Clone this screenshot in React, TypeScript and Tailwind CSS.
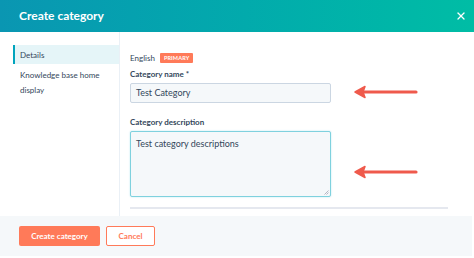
import { X } from 'lucide-react';

const Arrow = ({ top }: { top: number }) => (
  <svg
    className="absolute"
    style={{ left: 352, top: top - 8 }}
    width="68"
    height="16"
    viewBox="0 0 68 16"
  >
    <line x1="10" y1="8" x2="64" y2="8" stroke="#ef5a4c" strokeWidth="3.2" strokeLinecap="round" />
    <path d="M3 8 L13 2.5 L11 8 L13 13.5 Z" fill="#ef5a4c" stroke="#ef5a4c" strokeWidth="1.5" strokeLinejoin="round" />
  </svg>
);

export default function App() {
  return (
    <div
      className="relative w-[474px] h-[258px] bg-white overflow-hidden text-[#33475b]"
      style={{ fontFamily: 'Lato, "Open Sans", sans-serif' }}
    >
      {/* Header */}
      <div className="h-[32px] flex items-center justify-between pl-[19px] pr-[7px] bg-gradient-to-r from-[#0a96b2] to-[#00bda5]">
        <h1 className="text-white text-[12px] font-bold">Create category</h1>
        <X size={12} color="white" strokeWidth={2.5} />
      </div>

      {/* Body */}
      <div className="flex h-[184px]">
        <div className="w-[120px] shrink-0 pl-[13px] pt-[13px] border-r border-[#eaf0f6]">
          <div className="h-[19px] flex items-center bg-[#e5f5f8] border-l-[2px] border-[#00a4bd] pl-[5px] text-[8px]">
            Details
          </div>
          <div className="pl-[7px] pt-[4px] text-[8px] leading-[15px]">
            Knowledge base home display
          </div>
        </div>

        <div className="flex-1 pl-[10px] pt-[21px]">
          <div className="flex items-center gap-[5px] h-[10px]">
            <span className="text-[8px]">English</span>
            <span className="bg-[#ff7a59] text-white text-[5.5px] font-bold px-[4px] h-[10px] flex items-center rounded-[1px] tracking-wide">
              PRIMARY
            </span>
          </div>
          <div className="mt-[5px] text-[8px] font-bold">Category name *</div>
          <div className="mt-[3px] w-[201px] h-[20px] bg-[#f5f8fa] border border-[#cbd6e2] rounded-[2px] flex items-center px-[5px] text-[9px]">
            Test Category
          </div>
          <div className="mt-[13px] text-[8px] font-bold">Category description</div>
          <div className="relative mt-[3px] w-[201px] h-[66px] bg-[#f5f8fa] border border-[#7fd1de] rounded-[2px] px-[5px] pt-[5px] text-[9px] shadow-[0_0_2px_#b8e6ee]">
            Test category descriptions
            <svg className="absolute right-[1px] bottom-[1px]" width="5" height="5" viewBox="0 0 5 5">
              <path d="M4.5 0.5 L0.5 4.5 M4.5 2.5 L2.5 4.5" stroke="#99a" strokeWidth="0.7" />
            </svg>
          </div>
          <div className="mt-[10px] w-[318px] h-[1.5px] bg-[#e5e8ef]" />
        </div>
      </div>

      {/* Footer */}
      <div className="h-[40px] w-[472px] bg-[#f5f8fa] flex items-center gap-[6px] pl-[19px]">
        <button className="h-[20px] w-[81px] bg-[#ff7a59] text-white text-[8px] font-bold rounded-[2px]">
          Create category
        </button>
        <button className="h-[20px] w-[49px] bg-white border border-[#ff7a59] text-[#ff7a59] text-[8px] font-bold rounded-[2px]">
          Cancel
        </button>
      </div>

      <Arrow top={92} />
      <Arrow top={172} />
    </div>
  );
}
